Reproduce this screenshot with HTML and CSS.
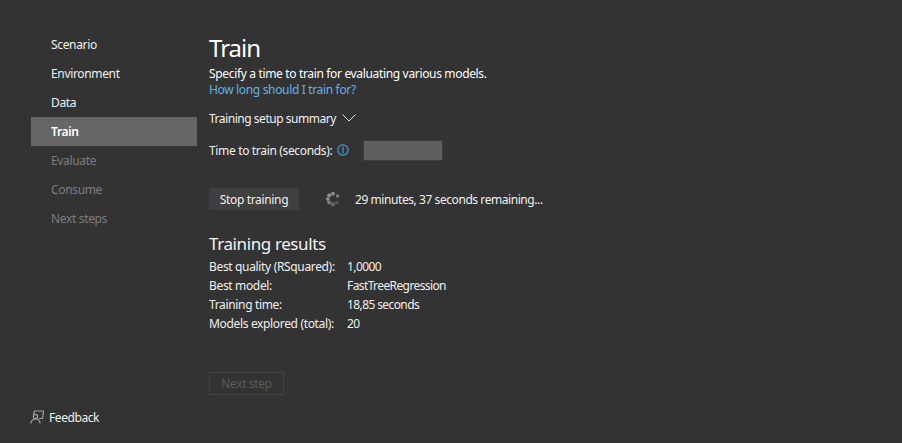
FILE: index.html
```html
<!DOCTYPE html>
<html lang="en">
<head>
    <meta charset="UTF-8">
    <title>Train</title>
    <link rel="stylesheet" href="styles.css">
</head>
<body>
    <div class="sidebar">
        <ul class="steps">
            <li>Scenario</li>
            <li>Environment</li>
            <li>Data</li>
            <li class="active">Train</li>
            <li class="disabled">Evaluate</li>
            <li class="disabled">Consume</li>
            <li class="disabled">Next steps</li>
        </ul>
        <div class="feedback">
            <svg class="feedback-icon" width="14" height="14" viewBox="0 0 14 14" fill="none" stroke="#a0a0a0" stroke-width="1.2">
                <path d="M3.5 5 L4.5 1 H13.5 L12.5 8.5 H9"/>
                <circle cx="5.5" cy="6.5" r="2.1"/>
                <path d="M0.8 13.5 C1.2 10.5 3 9 5.5 9 C8 9 9.8 10.5 10.2 13.5"/>
            </svg>
            <span>Feedback</span>
        </div>
    </div>

    <div class="main">
        <h1>Train</h1>
        <p class="intro">Specify a time to train for evaluating various models.</p>
        <a class="help-link">How long should I train for?</a>

        <div class="summary">
            <span>Training setup summary</span>
            <svg width="14" height="8" viewBox="0 0 14 8" fill="none" stroke="#e0e0e0" stroke-width="1">
                <path d="M0.5 0.5 L7 7 L13.5 0.5"/>
            </svg>
        </div>

        <div class="time-row">
            <span class="time-label">Time to train (seconds):</span>
            <svg class="info-icon" width="12" height="12" viewBox="0 0 12 12" fill="none" stroke="#4a9be0" stroke-width="1.2">
                <circle cx="6" cy="6" r="5.2"/>
                <path d="M6 2.8 V9.2"/>
            </svg>
            <div class="time-input"></div>
        </div>

        <div class="progress-row">
            <button class="stop-btn">Stop training</button>
            <svg class="spinner" width="16" height="16" viewBox="0 0 16 16">
                <circle cx="8" cy="2.8" r="2" fill="#8a8a8a"/>
                <circle cx="12.6" cy="5" r="1.7" fill="#7c7c7c"/>
                <circle cx="4.2" cy="4.2" r="2" fill="#8e8e8e"/>
                <circle cx="2.8" cy="8" r="2" fill="#8a8a8a"/>
                <circle cx="4.2" cy="11.6" r="2" fill="#7a7a7a"/>
                <circle cx="8" cy="13.2" r="2" fill="#6c6c6c"/>
                <circle cx="11.8" cy="11.6" r="1.8" fill="#565656"/>
            </svg>
            <span class="remaining">29 minutes, 37 seconds remaining...</span>
        </div>

        <h2>Training results</h2>
        <div class="results">
            <span>Best quality (RSquared):</span><span class="value">1,0000</span>
            <span>Best model:</span><span class="value">FastTreeRegression</span>
            <span>Training time:</span><span class="value">18,85 seconds</span>
            <span>Models explored (total):</span><span class="value">20</span>
        </div>

        <button class="next-btn" disabled>Next step</button>
    </div>
</body>
</html>
```

FILE: styles.css
```css
body {
    background-color: #333333;
    color: #f0f0f0;
    font-family: "Noto Sans", "Open Sans", sans-serif;
    font-size: 12px;
    letter-spacing: -0.34px;
    display: flex;
    height: 443px;
    margin: 0;
    overflow: hidden;
}

.sidebar {
    width: 166px;
    margin-left: 31px;
    padding-top: 30px;
    display: flex;
    flex-direction: column;
    justify-content: space-between;
    box-sizing: border-box;
    flex-shrink: 0;
}

.steps {
    list-style: none;
    margin: 0;
    padding: 0;
}

.steps li {
    height: 29px;
    line-height: 29px;
    padding-left: 20px;
}

.steps .active {
    background-color: #666666;
    color: #ffffff;
    font-weight: 600;
}

.steps .disabled {
    color: #7d7d7d;
}

.feedback {
    display: flex;
    align-items: center;
    gap: 5px;
    height: 16px;
    margin-left: -1px;
    margin-bottom: 18px;
    letter-spacing: -0.42px;
}

.main {
    margin-left: 12px;
    padding-top: 33px;
    flex-grow: 1;
}

h1 {
    font-size: 24px;
    font-weight: 400;
    line-height: 30px;
    margin: 0 0 3px 0;
    color: #ffffff;
    letter-spacing: -1px;
}

.intro {
    margin: 0;
    line-height: 16px;
    color: #ffffff;
}

.help-link {
    display: block;
    line-height: 16px;
    color: #5fb3e8;
}

.summary {
    display: flex;
    align-items: center;
    gap: 6px;
    height: 16px;
    margin-top: 12px;
    letter-spacing: -0.47px;
}

.time-row {
    display: flex;
    align-items: center;
    height: 22px;
    margin-top: 13px;
}

.time-label {
    width: 128px;
}

.info-icon {
    flex-shrink: 0;
}

.time-input {
    width: 80px;
    height: 21px;
    margin-left: 14px;
    box-sizing: border-box;
    background-color: #5f5f5f;
    border: 1px solid #3d3d3d;
}

.progress-row {
    display: flex;
    align-items: center;
    margin-top: 27px;
    height: 22px;
}

.remaining {
    letter-spacing: -0.43px;
}

.stop-btn {
    width: 90px;
    height: 22px;
    padding: 0;
    background-color: #3f3f3f;
    color: #f0f0f0;
    border: none;
    font: inherit;
    letter-spacing: inherit;
}

.spinner {
    margin-left: 26px;
    margin-right: 14px;
}

h2 {
    font-size: 17px;
    font-weight: 400;
    line-height: 22px;
    margin: 23px 0 2px 0;
    color: #f4f4f4;
    letter-spacing: -0.4px;
}

.results {
    display: grid;
    grid-template-columns: 138px auto;
    justify-content: start;
    grid-auto-rows: 19px;
    line-height: 19px;
    letter-spacing: -0.34px;
}

.results .value {
    letter-spacing: -0.6px;
}

.next-btn {
    display: block;
    width: 75px;
    height: 23px;
    margin-top: 39px;
    padding: 0;
    background: none;
    color: #5a5a5a;
    border: 1px solid #434343;
    font: inherit;
    letter-spacing: inherit;
}
```
